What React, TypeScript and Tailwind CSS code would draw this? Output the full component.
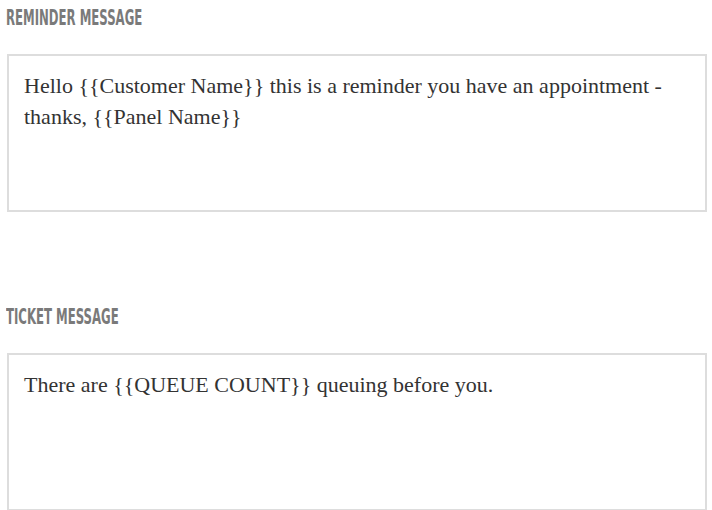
export default function App() {
  const sections = [
    {
      label: 'Reminder Message',
      text: 'Hello {{Customer Name}} this is a reminder you have an appointment - thanks, {{Panel Name}}',
    },
    {
      label: 'Ticket Message',
      text: 'There are {{QUEUE COUNT}} queuing before you.',
    },
  ];

  return (
    <div className="min-h-screen bg-white pl-[7px] pr-[5px] pt-[6px]">
      {sections.map((s, i) => (
        <div key={s.label} className={i > 0 ? 'mt-[93px]' : ''}>
          <div
            className="uppercase font-bold text-[#7a7a7a] text-[21px] leading-[25px] origin-left scale-x-[0.62] whitespace-nowrap -ml-px"
            style={{ fontFamily: '"DejaVu Sans Condensed", sans-serif' }}
          >
            {s.label}
          </div>
          <div
            className="mt-[23px] h-[158px] border-2 border-[#dddddd] px-[15px] pt-[14px] text-[22px] leading-[31px] text-[#333333]"
            style={{ fontFamily: '"Liberation Serif", serif' }}
          >
            {s.text}
          </div>
        </div>
      ))}
    </div>
  );
}
